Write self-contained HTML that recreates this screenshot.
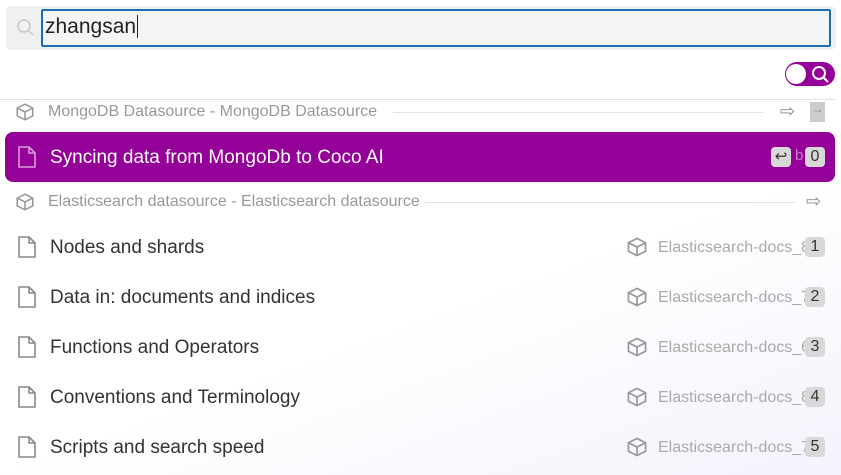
<!DOCTYPE html>
<html><head><style>
body{margin:0;width:841px;height:475px;overflow:hidden;background:linear-gradient(160deg,#fff 60%,#f4f2fb 100%);font-family:"Liberation Sans",sans-serif;position:relative}
.a{position:absolute}
.sb{left:6px;top:6px;width:830px;height:44px;background:#eef0f1;border-radius:6px}
.inp{left:41px;top:9px;width:786px;height:34px;border:2px solid #1b6eb4;border-radius:2px;background:#f3f4f5}
.hdr{font-size:16px;color:#999;}
.line{height:1px;background:#e2e2e2}
.row{left:5px;width:830px;height:50px}
.t{font-size:19px;color:#333;position:absolute;left:45px;top:15px}
.src{position:absolute;left:653px;top:17px;font-size:16px;color:#aaa;width:150px;overflow:hidden;white-space:nowrap}
.num{position:absolute;left:800px;top:15px;width:20px;height:20px;background:#d8d8d8;border-radius:4px;font-size:16px;color:#333;text-align:center;line-height:20px}
</style></head><body>
<div class="a sb"></div>
<svg class="a" style="left:16px;top:18px" width="20" height="20" viewBox="0 0 20 20"><circle cx="8" cy="8" r="6" fill="none" stroke="#c8c8c8" stroke-width="1.5"/><path d="M12.5 12.5L17 17" stroke="#c8c8c8" stroke-width="1.5"/></svg>
<div class="a inp"></div>
<div class="a" style="left:45px;top:15px;font-size:21px;color:#222">zhangsan<span style="border-left:1px solid #222;margin-left:1px"></span></div>
<div class="a" style="left:785px;top:62px;width:50px;height:24px;border-radius:12px;background:#950099"></div>
<div class="a" style="left:786px;top:64px;width:20px;height:20px;border-radius:10px;background:#fff"></div>
<svg class="a" style="left:810px;top:64px" width="22" height="20" viewBox="0 0 22 20"><circle cx="9" cy="9" r="6" fill="none" stroke="#fff" stroke-width="2"/><path d="M13.5 13.5L18 18" stroke="#fff" stroke-width="2"/></svg>
<div class="a line" style="left:0;top:99px;width:836px"></div>
<svg class="a" style="left:15px;top:102px" width="20" height="20" viewBox="0 0 18 18"><path d="M9 2L16 5.5V12.5L9 16L2 12.5V5.5Z M2 5.5L9 9L16 5.5 M9 9V16" fill="none" stroke="#999" stroke-width="1.4"/></svg>
<div class="a hdr" style="left:48px;top:103px">MongoDB Datasource - MongoDB Datasource</div>
<div class="a line" style="left:393px;top:112px;width:370px"></div>
<div class="a" style="left:780px;top:101px;font-size:18px;color:#888">⇨</div>
<div class="a" style="left:810px;top:102px;width:15px;height:20px;background:#ccc;font-size:12px;color:#888;text-align:center">→</div>
<div class="a row" style="top:132px;background:#950099;border-radius:8px">
<svg class="a" style="left:12px;top:13px" width="20" height="24" viewBox="0 0 20 24"><path d="M2 2H12L18 8V22H2Z M12 2V8H18" fill="none" stroke="#d99ad8" stroke-width="1.6" stroke-linejoin="round"/></svg>
<div class="t" style="color:#fff">Syncing data from MongoDb to Coco AI</div>
<div class="a" style="left:766px;top:15px;width:20px;height:20px;background:#d8d8d8;border-radius:4px;font-size:15px;text-align:center;line-height:20px;color:#333">↩</div>
<div class="a" style="left:790px;top:15px;color:#c980c8;font-size:15px">b</div>
<div class="num" style="left:800px;top:15px">0</div>
</div>
<svg class="a" style="left:15px;top:192px" width="20" height="20" viewBox="0 0 18 18"><path d="M9 2L16 5.5V12.5L9 16L2 12.5V5.5Z M2 5.5L9 9L16 5.5 M9 9V16" fill="none" stroke="#999" stroke-width="1.4"/></svg>
<div class="a hdr" style="left:48px;top:193px">Elasticsearch datasource - Elasticsearch datasource</div>
<div class="a line" style="left:425px;top:202px;width:370px"></div>
<div class="a" style="left:806px;top:191px;font-size:18px;color:#888">⇨</div>

<div class="a row" style="top:222px"><svg class="a" style="left:12px;top:13px" width="20" height="24" viewBox="0 0 20 24"><path d="M2 2H12L18 8V22H2Z M12 2V8H18" fill="none" stroke="#888" stroke-width="1.6" stroke-linejoin="round"/></svg><div class="t">Nodes and shards</div><svg class="a" style="left:621px;top:14px" width="22" height="22" viewBox="0 0 18 18"><path d="M9 2L16 5.5V12.5L9 16L2 12.5V5.5Z M2 5.5L9 9L16 5.5 M9 9V16" fill="none" stroke="#999" stroke-width="1.4"/></svg><div class="src">Elasticsearch-docs_8</div><div class="num">1</div></div>
<div class="a row" style="top:272px"><svg class="a" style="left:12px;top:13px" width="20" height="24" viewBox="0 0 20 24"><path d="M2 2H12L18 8V22H2Z M12 2V8H18" fill="none" stroke="#888" stroke-width="1.6" stroke-linejoin="round"/></svg><div class="t">Data in: documents and indices</div><svg class="a" style="left:621px;top:14px" width="22" height="22" viewBox="0 0 18 18"><path d="M9 2L16 5.5V12.5L9 16L2 12.5V5.5Z M2 5.5L9 9L16 5.5 M9 9V16" fill="none" stroke="#999" stroke-width="1.4"/></svg><div class="src">Elasticsearch-docs_7</div><div class="num">2</div></div>
<div class="a row" style="top:322px"><svg class="a" style="left:12px;top:13px" width="20" height="24" viewBox="0 0 20 24"><path d="M2 2H12L18 8V22H2Z M12 2V8H18" fill="none" stroke="#888" stroke-width="1.6" stroke-linejoin="round"/></svg><div class="t">Functions and Operators</div><svg class="a" style="left:621px;top:14px" width="22" height="22" viewBox="0 0 18 18"><path d="M9 2L16 5.5V12.5L9 16L2 12.5V5.5Z M2 5.5L9 9L16 5.5 M9 9V16" fill="none" stroke="#999" stroke-width="1.4"/></svg><div class="src">Elasticsearch-docs_6</div><div class="num">3</div></div>
<div class="a row" style="top:372px"><svg class="a" style="left:12px;top:13px" width="20" height="24" viewBox="0 0 20 24"><path d="M2 2H12L18 8V22H2Z M12 2V8H18" fill="none" stroke="#888" stroke-width="1.6" stroke-linejoin="round"/></svg><div class="t">Conventions and Terminology</div><svg class="a" style="left:621px;top:14px" width="22" height="22" viewBox="0 0 18 18"><path d="M9 2L16 5.5V12.5L9 16L2 12.5V5.5Z M2 5.5L9 9L16 5.5 M9 9V16" fill="none" stroke="#999" stroke-width="1.4"/></svg><div class="src">Elasticsearch-docs_8</div><div class="num">4</div></div>
<div class="a row" style="top:422px"><svg class="a" style="left:12px;top:13px" width="20" height="24" viewBox="0 0 20 24"><path d="M2 2H12L18 8V22H2Z M12 2V8H18" fill="none" stroke="#888" stroke-width="1.6" stroke-linejoin="round"/></svg><div class="t">Scripts and search speed</div><svg class="a" style="left:621px;top:14px" width="22" height="22" viewBox="0 0 18 18"><path d="M9 2L16 5.5V12.5L9 16L2 12.5V5.5Z M2 5.5L9 9L16 5.5 M9 9V16" fill="none" stroke="#999" stroke-width="1.4"/></svg><div class="src">Elasticsearch-docs_7</div><div class="num">5</div></div>
</body></html>
